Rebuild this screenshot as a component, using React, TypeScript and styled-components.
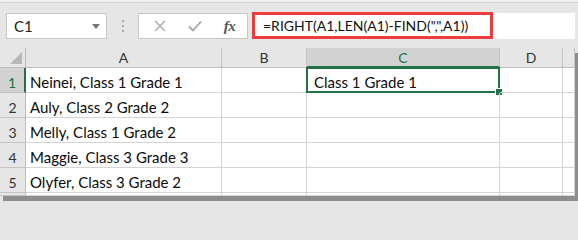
import React from 'react';
import styled, { createGlobalStyle } from 'styled-components';

const GlobalStyle = createGlobalStyle`
  html, body {
    margin: 0;
    padding: 0;
    background: #e6e6e6;
    overflow: hidden;
  }
  body {
    font-family: Lato, "Liberation Sans", sans-serif;
  }
`;

const GREEN = '#217346';

const Window = styled.div`
  width: 578px;
  height: 201px;
  background: #e6e6e6;
  display: flex;
  flex-direction: column;
  overflow: hidden;
`;

const TopStrip = styled.div`
  height: 2px;
  background: #efefef;
  border-bottom: 1px solid #d4d4d4;
`;

const FormulaRow = styled.div`
  display: flex;
  height: 26px;
  width: 569px;
  margin: 10px 0 9px 6px;
`;

const NameBox = styled.div`
  box-sizing: border-box;
  width: 101px;
  display: flex;
  align-items: center;
  justify-content: space-between;
  padding: 0 6px 0 7px;
  background: #fff;
  border: 1px solid #c6c6c6;
  font-size: 15px;
  color: #222;
`;

const Caret = styled.span`
  width: 0;
  height: 0;
  border-left: 4px solid transparent;
  border-right: 4px solid transparent;
  border-top: 5px solid #777;
`;

const Grip = styled.div`
  width: 31px;
  display: flex;
  flex-direction: column;
  align-items: center;
  justify-content: center;
  gap: 3px;
`;

const Dot = styled.span`
  width: 2px;
  height: 2px;
  background: #a8a8a8;
`;

const ButtonBox = styled.div`
  box-sizing: border-box;
  width: 110px;
  display: flex;
  align-items: center;
  padding-left: 3px;
  background: #fff;
  border: 1px solid #c6c6c6;
`;

const BarButton = styled.span`
  width: 35px;
  display: flex;
  align-items: center;
  justify-content: center;
`;

const Fx = styled.span`
  font-family: "Liberation Serif", serif;
  font-style: italic;
  font-weight: bold;
  font-size: 15px;
  color: #555;
  letter-spacing: -0.5px;
`;

const FormulaBar = styled.div`
  flex: 1;
  margin-left: 4px;
  display: flex;
  background: #fff;
`;

const Highlight = styled.div`
  box-sizing: border-box;
  width: 241px;
  height: 27px;
  margin-top: -1px;
  display: flex;
  align-items: center;
  padding-left: 8px;
  border: 3px solid #ee3b3b;
  font-size: 14px;
  color: #111;
  white-space: nowrap;
`;

const Sheet = styled.div`
  width: 575px;
  height: 148px;
  display: grid;
  grid-template-columns: 26px 196px 85px 193px 63px 12px;
  grid-template-rows: 20px repeat(5, 25px) 3px;
  background: #fff;
  box-shadow: 3px 5px 0 #8e8e8e;
`;

const Corner = styled.div`
  box-sizing: border-box;
  background: #e6e6e6;
  border-right: 1px solid #bdbdbd;
  border-bottom: 1px solid #bdbdbd;
  display: flex;
  align-items: flex-end;
  justify-content: flex-end;
  padding: 0 3px 3px 0;
`;

const CornerMark = styled.span`
  width: 0;
  height: 0;
  border-left: 12px solid transparent;
  border-bottom: 12px solid #b7b7b7;
`;

const ColHead = styled.div<{ $active?: boolean }>`
  box-sizing: border-box;
  display: flex;
  align-items: center;
  justify-content: center;
  background: ${(p) => (p.$active ? '#d2d2d2' : '#e6e6e6')};
  border-right: 1px solid #c4c4c4;
  border-bottom: ${(p) => (p.$active ? `2px solid ${GREEN}` : '1px solid #bdbdbd')};
  font-size: 14px;
  color: ${(p) => (p.$active ? GREEN : '#333')};
`;

const RowHead = styled.div<{ $active?: boolean }>`
  box-sizing: border-box;
  display: flex;
  align-items: flex-end;
  justify-content: center;
  padding-bottom: 1px;
  background: ${(p) => (p.$active ? '#d2d2d2' : '#e6e6e6')};
  border-right: ${(p) => (p.$active ? `2px solid ${GREEN}` : '1px solid #bdbdbd')};
  border-bottom: 1px solid #c4c4c4;
  font-size: 14px;
  color: ${(p) => (p.$active ? GREEN : '#333')};
`;

const Cell = styled.div<{ $selected?: boolean }>`
  box-sizing: border-box;
  position: relative;
  display: flex;
  align-items: flex-end;
  padding: 0 0 1px ${(p) => (p.$selected ? '7px' : '4px')};
  border-right: 1px solid #d4d4d4;
  border-bottom: 1px solid #d4d4d4;
  font-size: 15px;
  color: #0b0b0b;
  white-space: nowrap;
  overflow: visible;
`;

const Selection = styled.span`
  position: absolute;
  left: -1px;
  top: -1px;
  right: -1px;
  bottom: -1px;
  border: 2px solid ${GREEN};
  pointer-events: none;
`;

const FillHandle = styled.span`
  position: absolute;
  right: -4px;
  bottom: -4px;
  width: 6px;
  height: 6px;
  background: ${GREEN};
  border: 1px solid #fff;
`;

const CancelIcon = () => (
  <svg width="12" height="12" viewBox="0 0 12 12">
    <path d="M1 1 L11 11 M11 1 L1 11" stroke="#a6a6a6" strokeWidth="1.3" fill="none" />
  </svg>
);

const EnterIcon = () => (
  <svg width="14" height="12" viewBox="0 0 14 12">
    <path d="M1 6.5 L5 10.5 L13 1.5" stroke="#a6a6a6" strokeWidth="1.8" fill="none" />
  </svg>
);

const columns = ['A', 'B', 'C', 'D', ''];

const rows = [
  'Neinei, Class 1 Grade 1',
  'Auly, Class 2 Grade 2',
  'Melly, Class 1 Grade 2',
  'Maggie, Class 3 Grade 3',
  'Olyfer, Class 3 Grade 2',
];

const App = () => (
  <>
    <GlobalStyle />
    <Window>
      <TopStrip />
      <FormulaRow>
        <NameBox>
          C1
          <Caret />
        </NameBox>
        <Grip>
          <Dot />
          <Dot />
          <Dot />
        </Grip>
        <ButtonBox>
          <BarButton><CancelIcon /></BarButton>
          <BarButton><EnterIcon /></BarButton>
          <BarButton><Fx>fx</Fx></BarButton>
        </ButtonBox>
        <FormulaBar>
          <Highlight>=RIGHT(A1,LEN(A1)-FIND(",",A1))</Highlight>
        </FormulaBar>
      </FormulaRow>
      <Sheet>
        <Corner><CornerMark /></Corner>
        {columns.map((c, i) => (
          <ColHead key={i} $active={c === 'C'}>{c}</ColHead>
        ))}
        {rows.map((text, r) => (
          <React.Fragment key={r}>
            <RowHead $active={r === 0}>{r + 1}</RowHead>
            <Cell>{text}</Cell>
            <Cell />
            <Cell $selected={r === 0}>
              {r === 0 && 'Class 1 Grade 1'}
              {r === 0 && (
                <>
                  <Selection />
                  <FillHandle />
                </>
              )}
            </Cell>
            <Cell />
            <Cell />
          </React.Fragment>
        ))}
        <RowHead />
        <Cell />
        <Cell />
        <Cell />
        <Cell />
        <Cell />
      </Sheet>
    </Window>
  </>
);

export default App;
